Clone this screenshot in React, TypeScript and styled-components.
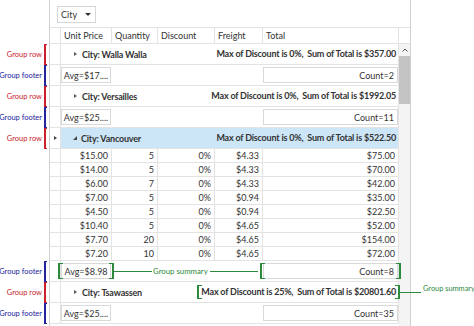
import React from 'react';
import styled, { createGlobalStyle, css } from 'styled-components';

const GREEN = '#2c8a3c';
const RED = '#cc1f2e';
const BLUE = '#24249c';
const LINE = '#e3e3e3';
const BORDER = '#d0d0d0';
const TEXT = '#333333';

type Kind = 'row' | 'footer';

const GlobalStyle = createGlobalStyle`
  html, body { margin: 0; padding: 0; background: #ffffff; overflow: hidden; }
  body {
    font-family: Lato, "Open Sans", "DejaVu Sans", sans-serif;
    font-size: 9px;
    color: ${TEXT};
  }
  * { box-sizing: border-box; }
`;

const Page = styled.div`
  display: flex;
  align-items: flex-start;
  width: 474px;
  height: 326px;
  overflow: hidden;
`;

/* ---------- left annotations ---------- */
const Gutter = styled.div`
  width: 49px;
  flex: none;
  display: flex;
  flex-direction: column;
  padding-top: 44px;
`;

const Note = styled.div<{ $kind: Kind }>`
  height: 21px;
  display: grid;
  grid-template-columns: 44px 3px;
  color: ${(p) => (p.$kind === 'row' ? RED : BLUE)};
`;

const NoteText = styled.span`
  display: flex;
  justify-content: flex-end;
  align-items: center;
  padding-right: 2px;
  font-size: 7.5px;
  white-space: nowrap;
`;

const NoteMark = styled.span`
  margin: 0;
  border: 1px solid currentColor;
  border-left-width: 2px;
  border-right: none;
`;

const GutterGap = styled.div<{ $h: number }>`
  height: ${(p) => p.$h}px;
`;

/* ---------- grid ---------- */
const GridBox = styled.div`
  width: 362px;
  flex: none;
  height: 326px;
  border-left: 1px solid ${BORDER};
  border-right: 1px solid ${BORDER};
  display: flex;
  flex-direction: column;
`;

const GroupPanel = styled.div`
  height: 28px;
  border-bottom: 1px solid ${LINE};
  padding: 6px 0 0 7px;
`;

const Chip = styled.div`
  width: 39px;
  height: 17px;
  border: 1px solid #d6d6d6;
  display: flex;
  align-items: center;
  justify-content: space-between;
  padding: 0 4px 0 3px;
`;

const DropArrow = styled.span`
  width: 0;
  height: 0;
  border-left: 3px solid transparent;
  border-right: 3px solid transparent;
  border-top: 3px solid #333;
`;

const Body = styled.div`
  flex: 1;
  display: flex;
`;

const Rows = styled.div`
  width: 349px;
  display: flex;
  flex-direction: column;
`;

const Row = styled.div<{ $h: number }>`
  display: grid;
  grid-template-columns: 11px 338px;
  height: ${(p) => p.$h}px;
  flex: none;
`;

const Indicator = styled.div`
  border-right: 1px solid ${LINE};
  border-bottom: 1px solid ${LINE};
  display: flex;
  align-items: center;
  justify-content: center;
`;

const CurrentMark = styled.span`
  width: 0;
  height: 0;
  border-top: 2.5px solid transparent;
  border-bottom: 2.5px solid transparent;
  border-left: 3px solid #444;
  margin-left: 1px;
`;

const Columns = styled.div`
  display: grid;
  grid-template-columns: 51px 46px 57px 48px 136px;
`;

const HeadCell = styled.div`
  border-right: 1px solid ${LINE};
  border-bottom: 1px solid ${LINE};
  display: flex;
  align-items: center;
  padding-left: 3px;
  white-space: nowrap;
`;

const Cell = styled.div`
  border-right: 1px solid ${LINE};
  border-bottom: 1px solid ${LINE};
  display: flex;
  align-items: center;
  justify-content: flex-end;
  padding-right: 3px;
  white-space: nowrap;
`;

const Span = styled.div<{ $selected?: boolean }>`
  border-right: 1px solid ${LINE};
  border-bottom: 1px solid ${LINE};
  display: flex;
  align-items: center;
  background: ${(p) => (p.$selected ? '#cce6f8' : '#ffffff')};
`;

const GroupLine = styled(Span)`
  padding: 0 2px 0 13px;
  font-weight: 700;
  letter-spacing: -0.2px;
`;

const FooterLine = styled(Span)`
  padding: 0;
`;

const Expander = styled.span<{ $open?: boolean }>`
  width: 0;
  height: 0;
  margin-right: 5px;
  ${(p) =>
    p.$open
      ? css`
          border-left: 4px solid transparent;
          border-bottom: 4px solid #444;
          margin-left: -1px;
          margin-right: 4px;
        `
      : css`
          border-top: 2.5px solid transparent;
          border-bottom: 2.5px solid transparent;
          border-left: 3px solid #555;
        `}
`;

const bracket = css`
  position: relative;
  &::before,
  &::after {
    content: '';
    position: absolute;
    top: -1px;
    bottom: -1px;
    width: 3px;
    border: 1px solid ${GREEN};
  }
  &::before {
    left: -4px;
    border-left-width: 2px;
    border-right: none;
  }
  &::after {
    right: -4px;
    border-right-width: 2px;
    border-left: none;
  }
`;

const Summary = styled.span<{ $mark?: boolean }>`
  margin-left: auto;
  white-space: pre;
  line-height: 12px;
  ${(p) => p.$mark && bracket}
`;

const FooterBox = styled.div<{ $w: number; $align: 'center' | 'right'; $mark?: boolean }>`
  width: ${(p) => p.$w}px;
  height: 16px;
  flex: none;
  border: 1px solid #d9d9d9;
  display: flex;
  align-items: center;
  justify-content: ${(p) => (p.$align === 'center' ? 'center' : 'flex-end')};
  padding: 0 3px;
  white-space: nowrap;
  overflow: visible;
  ${(p) => p.$mark && bracket}
`;

const Connector = styled.div`
  flex: 1;
  align-self: stretch;
  display: flex;
  align-items: center;
  padding: 0 5px 0 3px;
`;

const Wire = styled.span<{ $w?: number }>`
  height: 1px;
  background: ${GREEN};
  flex: ${(p) => (p.$w ? `0 0 ${p.$w}px` : '1')};
`;

const WireLabel = styled.span`
  color: ${GREEN};
  font-size: 7.8px;
  padding: 0 2px 0 1px;
  white-space: nowrap;
`;

const Callout = styled.span`
  position: absolute;
  left: calc(100% + 4px);
  top: 50%;
  width: 21px;
  height: 1px;
  background: ${GREEN};
`;

const CalloutLabel = styled.span`
  position: absolute;
  left: 23px;
  top: -9px;
  color: ${GREEN};
  font-size: 7.4px;
  font-weight: 400;
  letter-spacing: 0;
  white-space: nowrap;
`;

/* ---------- scrollbar ---------- */
const ScrollCol = styled.div`
  width: 11px;
  display: flex;
  flex-direction: column;
  background: #f4f4f4;
`;

const ScrollHead = styled.div`
  height: 16px;
  background: #ffffff;
  border-bottom: 1px solid ${LINE};
`;

const ScrollBtn = styled.div`
  height: 12px;
  display: flex;
  align-items: center;
  justify-content: center;
`;

const Thumb = styled.div`
  height: 48px;
  background: #c3c3c3;
`;

/* ---------- data ---------- */
type Group = { city: string; max: string; sum: string; avg: string; count: string };

const rows = [
  ['$15.00', '5', '0%', '$4.33', '$75.00'],
  ['$14.00', '5', '0%', '$4.33', '$70.00'],
  ['$6.00', '7', '0%', '$4.33', '$42.00'],
  ['$7.00', '5', '0%', '$0.94', '$35.00'],
  ['$4.50', '5', '0%', '$0.94', '$22.50'],
  ['$10.40', '5', '0%', '$4.65', '$52.00'],
  ['$7.70', '20', '0%', '$4.65', '$154.00'],
  ['$7.20', '10', '0%', '$4.65', '$72.00'],
];

const headers = ['Unit Price', 'Quantity', 'Discount', 'Freight', 'Total'];

const GroupRow: React.FC<{ g: Group; open?: boolean; current?: boolean; mark?: boolean }> = ({
  g,
  open,
  current,
  mark,
}) => (
  <Row $h={21}>
    <Indicator>{current && <CurrentMark />}</Indicator>
    <GroupLine $selected={current}>
      <Expander $open={open} />
      <span>City: {g.city}</span>
      <Summary $mark={mark}>
        {`Max of Discount is ${g.max},  Sum of Total is ${g.sum}`}
        {mark && (
          <Callout>
            <CalloutLabel>Group summary</CalloutLabel>
          </Callout>
        )}
      </Summary>
    </GroupLine>
  </Row>
);

const FooterRow: React.FC<{ g: Group; mark?: boolean }> = ({ g, mark }) => (
  <Row $h={21}>
    <Indicator />
    <FooterLine>
      <FooterBox $w={50} $align="center" $mark={mark}>
        Avg={g.avg}
      </FooterBox>
      <Connector>
        {mark && (
          <>
            <Wire $w={38} />
            <WireLabel>Group summary</WireLabel>
            <Wire />
          </>
        )}
      </Connector>
      <FooterBox $w={135} $align="right" $mark={mark}>
        Count={g.count}
      </FooterBox>
    </FooterLine>
  </Row>
);

const groups: Record<string, Group> = {
  walla: { city: 'Walla Walla', max: '0%', sum: '$357.00', avg: '$17....', count: '2' },
  vers: { city: 'Versailles', max: '0%', sum: '$1992.05', avg: '$25....', count: '11' },
  van: { city: 'Vancouver', max: '0%', sum: '$522.50', avg: '$8.98', count: '8' },
  tsa: { city: 'Tsawassen', max: '25%', sum: '$20801.60', avg: '$25....', count: '35' },
};

const notes: (Kind | number)[] = ['row', 'footer', 'row', 'footer', 'row', 112, 'footer', 'row', 'footer'];

export default function App() {
  return (
    <>
      <GlobalStyle />
      <Page>
        <Gutter>
          {notes.map((n, i) =>
            typeof n === 'number' ? (
              <GutterGap key={i} $h={n} />
            ) : (
              <Note key={i} $kind={n}>
                <NoteText>{n === 'row' ? 'Group row' : 'Group footer'}</NoteText>
                <NoteMark />
              </Note>
            )
          )}
        </Gutter>
        <GridBox>
          <GroupPanel>
            <Chip>
              <span>City</span>
              <DropArrow />
            </Chip>
          </GroupPanel>
          <Body>
            <Rows>
              <Row $h={16}>
                <Indicator />
                <Columns>
                  {headers.map((h) => (
                    <HeadCell key={h}>{h}</HeadCell>
                  ))}
                </Columns>
              </Row>
              <GroupRow g={groups.walla} />
              <FooterRow g={groups.walla} />
              <GroupRow g={groups.vers} />
              <FooterRow g={groups.vers} />
              <GroupRow g={groups.van} open current />
              {rows.map((r, i) => (
                <Row $h={14} key={i}>
                  <Indicator />
                  <Columns>
                    {r.map((v, j) => (
                      <Cell key={j}>{v}</Cell>
                    ))}
                  </Columns>
                </Row>
              ))}
              <FooterRow g={groups.van} mark />
              <GroupRow g={groups.tsa} mark />
              <FooterRow g={groups.tsa} />
            </Rows>
            <ScrollCol>
              <ScrollHead />
              <ScrollBtn>
                <svg width="6" height="4" viewBox="0 0 6 4">
                  <polyline points="0.5,3.5 3,1 5.5,3.5" fill="none" stroke="#555" strokeWidth="1" />
                </svg>
              </ScrollBtn>
              <Thumb />
            </ScrollCol>
          </Body>
        </GridBox>
      </Page>
    </>
  );
}
